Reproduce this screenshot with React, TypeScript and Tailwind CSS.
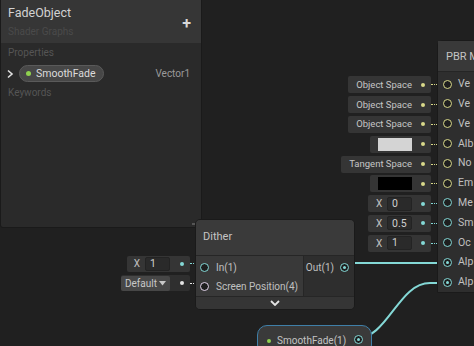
import React from "react";

const font = { fontFamily: "Roboto, 'Noto Sans', sans-serif" };

function Port({ color, filled = false }: { color: string; filled?: boolean }) {
  return (
    <span
      className="flex h-[9px] w-[9px] shrink-0 items-center justify-center rounded-full border-[1.5px] bg-[#1e1e1e]"
      style={{ borderColor: color }}
    >
      {filled && <span className="h-[3px] w-[3px] rounded-full" style={{ background: color }} />}
    </span>
  );
}

function Dot({ color }: { color: string }) {
  return <span className="block h-[4px] w-[4px] shrink-0 rounded-full" style={{ background: color }} />;
}

function Dashes({ color, w = 14 }: { color: string; w?: number }) {
  return (
    <span
      className="h-0 shrink-0 border-t border-dotted"
      style={{ borderColor: color, width: w }}
    />
  );
}

const YEL = "#d9d98a";
const TEAL = "#84d8d6";
const PINK = "#e2d4ea";

type Inline =
  | { kind: "space"; label: string }
  | { kind: "swatch"; color: string }
  | { kind: "x"; value: string };

const inlines: Inline[] = [
  { kind: "space", label: "Object Space" },
  { kind: "space", label: "Object Space" },
  { kind: "space", label: "Object Space" },
  { kind: "swatch", color: "#d4d4d4" },
  { kind: "space", label: "Tangent Space" },
  { kind: "swatch", color: "#000000" },
  { kind: "x", value: "0" },
  { kind: "x", value: "0.5" },
  { kind: "x", value: "1" },
];

const masterPorts = ["Ve", "Ve", "Ve", "Alb", "No", "Em", "Me", "Sm", "Oc", "Alp", "Alp"];

function InlineField({ item }: { item: Inline }) {
  const teal = item.kind === "x";
  const c = teal ? TEAL : YEL;
  return (
    <div className="flex h-[19.8px] items-center justify-end">
      <div className="flex h-[17px] items-center rounded-[2px] bg-[#353535] pl-[8px] pr-[6px]">
        {item.kind === "space" && (
          <span className="whitespace-nowrap text-[9.5px] text-[#c6c6c6]">{item.label}</span>
        )}
        {item.kind === "swatch" && (
          <span className="h-[13px] w-[34px]" style={{ background: item.color }} />
        )}
        {item.kind === "x" && (
          <>
            <span className="mr-[5px] w-[6px] text-[10px] text-[#c0c0c0]">X</span>
            <span className="flex h-[14px] w-[25px] items-center rounded-[2px] border border-[#232323] bg-[#2a2a2a] pl-[4px] text-[10.5px] text-[#d0d0d0]">
              {item.value}
            </span>
          </>
        )}
        <span className="ml-[9px]">
          <Dot color={c} />
        </span>
      </div>
      <Dashes color={c} w={12} />
    </div>
  );
}

export default function App() {
  return (
    <div className="relative h-[346px] w-[474px] overflow-hidden bg-[#202020]" style={font}>
      {/* edges */}
      <svg className="absolute left-0 top-0" width={474} height={346}>
        <path d="M349 263 L447 263" stroke={TEAL} strokeWidth={2} fill="none" />
        <path d="M355 339 C 388 339, 398 283, 430 283 L447 283" stroke={TEAL} strokeWidth={2} fill="none" />
      </svg>

      {/* blackboard */}
      <div className="absolute left-0 top-0 flex h-[228px] w-[202px] flex-col rounded-b-[3px] border border-t-0 border-[#1a1a1a] bg-[#2a2a2a]">
        <div className="relative h-[43px] bg-[#363636] px-[7px] pt-[4px]">
          <div className="text-[12.5px] leading-[18px] text-[#d2d2d2]">FadeObject</div>
          <div className="mt-[2px] text-[10px] leading-[16px] text-[#4a4a4a]">Shader Graphs</div>
          <span className="absolute right-[10px] top-[12px] text-[16px] font-semibold text-[#d8d8d8]">+</span>
        </div>
        <div className="px-[7px] pt-[2px] text-[10px] leading-[16px] text-[#555]">Properties</div>
        <div className="mt-[4px] flex h-[17px] items-center pl-[5px] pr-[11px]">
          <svg width={8} height={10} viewBox="0 0 8 10" className="mr-[5px]">
            <path d="M2 1.5 L6 5 L2 8.5" stroke="#e0e0e0" strokeWidth={1.6} fill="none" />
          </svg>
          <div className="flex h-[17px] items-center gap-[5px] rounded-full border border-[#5a5a5a] bg-[#474747] pl-[6px] pr-[8px]">
            <span className="h-[5px] w-[5px] rounded-full bg-[#8fd14f]" />
            <span className="text-[10.5px] text-[#dcdcdc]">SmoothFade</span>
          </div>
          <span className="ml-auto text-[10px] text-[#9a9a9a]">Vector1</span>
        </div>
        <div className="px-[7px] pt-[3px] text-[10px] leading-[16px] text-[#555]">Keywords</div>
        <span className="absolute bottom-[2px] right-0 h-[2px] w-[9px] bg-[#555]" />
      </div>

      {/* inline fields for master */}
      <div className="absolute left-[300px] top-[75px] flex w-[143px] flex-col">
        {inlines.map((it, i) => (
          <InlineField key={i} item={it} />
        ))}
      </div>

      {/* PBR master */}
      <div className="absolute left-[437px] top-[40px] flex h-[253px] w-[60px] flex-col rounded-tl-[5px] border border-[#1a1a1a] bg-[#2e2e2e]">
        <div className="h-[32px] whitespace-nowrap border-b border-[#252525] bg-[#393939] pl-[8px] pt-[8px] text-[11px] text-[#c4c4c4]">
          PBR Master
        </div>
        <div className="flex flex-col pt-[2px]">
          {masterPorts.map((p, i) => (
            <div key={i} className="flex h-[19.8px] items-center gap-[6px] pl-[5px]">
              <Port color={i < 6 ? YEL : TEAL} filled={i >= 9} />
              <span className="text-[10.5px] text-[#c0c0c0]">{p}</span>
            </div>
          ))}
        </div>
      </div>

      {/* inline fields for dither */}
      <div className="absolute left-[110px] top-[254px] flex w-[88px] flex-col">
        <div className="flex h-[19.5px] items-center justify-end">
          <div className="flex h-[16px] items-center rounded-[2px] bg-[#353535] pl-[7px] pr-[6px]">
            <span className="mr-[5px] text-[10px] text-[#c0c0c0]">X</span>
            <span className="flex h-[14px] w-[25px] items-center rounded-[2px] border border-[#232323] bg-[#2a2a2a] pl-[4px] text-[10.5px] text-[#d0d0d0]">
              1
            </span>
            <span className="ml-[10px]">
              <Dot color={TEAL} />
            </span>
          </div>
          <Dashes color={TEAL} w={8} />
        </div>
        <div className="flex h-[19.5px] items-center justify-end">
          <div className="flex h-[16px] items-center rounded-[2px] bg-[#2f2f2f] pr-[6px]">
            <span className="flex h-[15px] items-center gap-[2px] whitespace-nowrap rounded-[2px] bg-[#474747] px-[4px] text-[10px] text-[#c8c8c8]">
              Default
              <svg width={7} height={5} viewBox="0 0 7 5">
                <path d="M0 0 L7 0 L3.5 4.5 Z" fill="#c8c8c8" />
              </svg>
            </span>
            <span className="ml-[10px]">
              <Dot color="#e6e6e6" />
            </span>
          </div>
          <Dashes color="#e6e6e6" w={8} />
        </div>
      </div>

      {/* Dither node */}
      <div className="absolute left-[195px] top-[219px] flex h-[91px] w-[160px] flex-col overflow-hidden rounded-[5px] border border-[#1a1a1a] bg-[#2e2e2e]">
        <div className="h-[37px] border-b border-[#262626] bg-[#3a3a3a] pl-[7px] pt-[9px] text-[11px] text-[#c4c4c4]">
          Dither
        </div>
        <div className="flex flex-1">
          <div className="flex w-[107px] flex-col bg-[#393939] pt-[1px]">
            <div className="flex h-[19.5px] items-center gap-[7px] pl-[4px]">
              <Port color={TEAL} />
              <span className="text-[10px] text-[#c0c0c0]">In(1)</span>
            </div>
            <div className="flex h-[19.5px] items-center gap-[7px] pl-[4px]">
              <Port color={PINK} />
              <span className="whitespace-nowrap text-[10px] text-[#c0c0c0]">Screen Position(4)</span>
            </div>
          </div>
          <div className="flex flex-1 flex-col border-l border-[#262626] pt-[1px]">
            <div className="flex h-[19.5px] items-center justify-end gap-[6px] pr-[5px]">
              <span className="text-[10px] text-[#c0c0c0]">Out(1)</span>
              <Port color={TEAL} filled />
            </div>
          </div>
        </div>
        <div className="flex h-[13px] items-center justify-center border-t border-[#262626] bg-[#353535]">
          <svg width={10} height={6} viewBox="0 0 10 6">
            <path d="M1 1 L5 5 L9 1" stroke="#e4e4e4" strokeWidth={1.8} fill="none" />
          </svg>
        </div>
      </div>

      {/* SmoothFade property node */}
      <div className="absolute left-[257px] top-[325px] flex h-[30px] w-[115px] items-start gap-[6px] rounded-[10px] border-[1.5px] border-[#3f7fa8] bg-[#3a3a3a] pl-[9px] pt-[9px]">
        <span className="mt-[4px] h-[4px] w-[4px] rounded-full bg-[#8fd14f]" />
        <span className="whitespace-nowrap text-[10px] leading-[12px] text-[#c4c4c4]">SmoothFade(1)</span>
        <span className="ml-[2px]">
          <Port color={TEAL} filled />
        </span>
      </div>
    </div>
  );
}
